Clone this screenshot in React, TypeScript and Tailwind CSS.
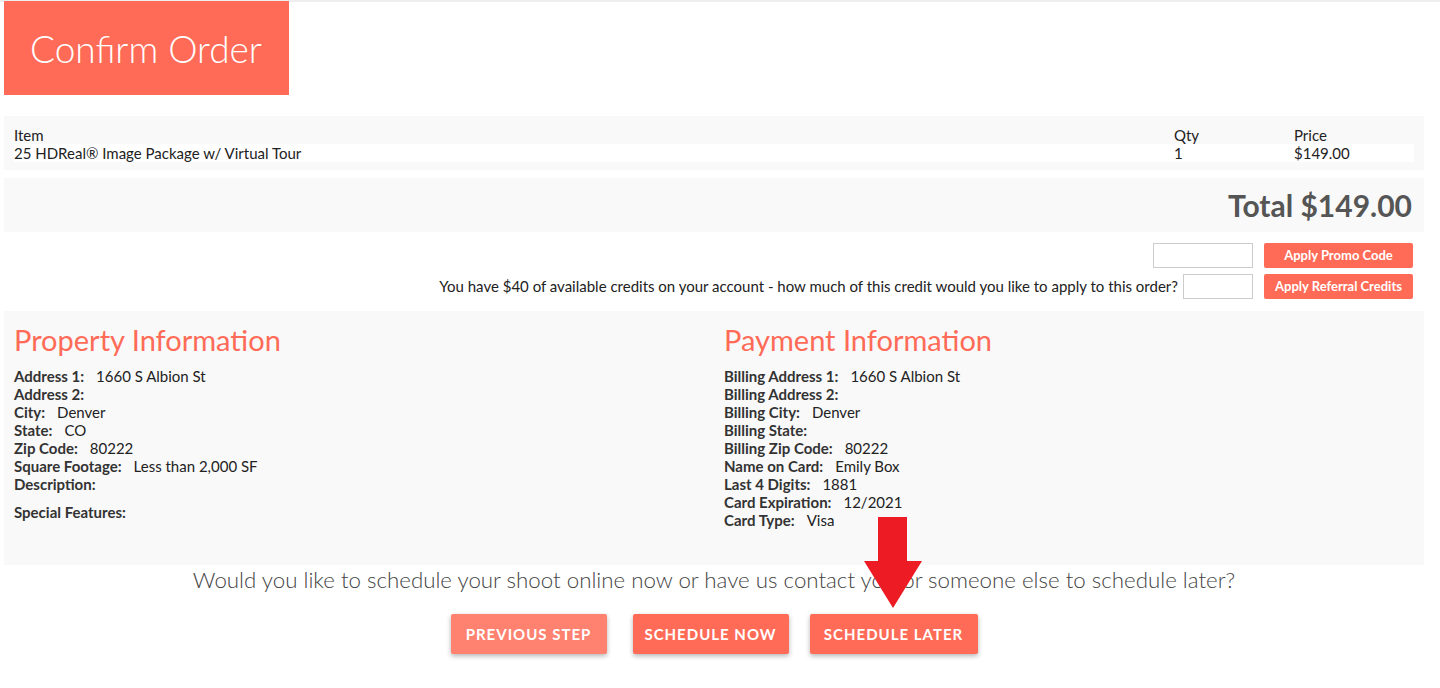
import React from "react";

const orange = "bg-[#ff6b57]";

const property: [string, string][] = [
  ["Address 1:", "1660 S Albion St"],
  ["Address 2:", ""],
  ["City:", "Denver"],
  ["State:", "CO"],
  ["Zip Code:", "80222"],
  ["Square Footage:", "Less than 2,000 SF"],
  ["Description:", ""],
];

const payment: [string, string][] = [
  ["Billing Address 1:", "1660 S Albion St"],
  ["Billing Address 2:", ""],
  ["Billing City:", "Denver"],
  ["Billing State:", ""],
  ["Billing Zip Code:", "80222"],
  ["Name on Card:", "Emily Box"],
  ["Last 4 Digits:", "1881"],
  ["Card Expiration:", "12/2021"],
  ["Card Type:", "Visa"],
];

function Line({ label, value }: { label: string; value: string }) {
  return (
    <div className="leading-[18px]">
      <span className="font-bold text-[#333]">{label}</span>
      {value && <span className="ml-[12px]">{value}</span>}
    </div>
  );
}

export default function App() {
  return (
    <div className="relative min-h-screen bg-white border-t-2 border-[#eeeeee] font-['Lato',sans-serif] text-[15px] text-[#222]">
      <div className="ml-[4px] w-[1420px]">
        {/* header */}
        <div className={`-mt-px relative w-[285px] h-[94px] ${orange} flex items-center pl-[26px]`}>
          <h1 className="text-white text-[37px] font-light leading-none">Confirm Order</h1>
        </div>

        {/* items table */}
        <div className="mt-[21px] bg-[#f9f9f9] px-[10px] pt-[10px] pb-[8px]">
          <div className="flex leading-[18px]">
            <div className="flex-1">Item</div>
            <div className="w-[120px]">Qty</div>
            <div className="w-[120px]">Price</div>
          </div>
          <div className="flex leading-[18px] bg-white">
            <div className="flex-1">25 HDReal® Image Package w/ Virtual Tour</div>
            <div className="w-[120px]">1</div>
            <div className="w-[120px]">$149.00</div>
          </div>
        </div>

        {/* total */}
        <div className="mt-[8px] h-[54px] bg-[#f9f9f9] flex items-center justify-end pr-[12px]">
          <span className="text-[30px] font-bold text-[#555]">Total $149.00</span>
        </div>

        {/* promo / credits */}
        <div className="mt-[11px] flex flex-col items-end gap-[6px] pr-[11px]">
          <div className="flex items-center">
            <input className="w-[100px] h-[25px] border border-[#cccccc] bg-white" />
            <button className={`ml-[11px] w-[149px] h-[25px] ${orange} rounded-[2px] text-white text-[13px] font-bold`}>
              Apply Promo Code
            </button>
          </div>
          <div className="flex items-center">
            <span className="mr-[5px]">
              You have $40 of available credits on your account - how much of this credit would you like to apply to this order?
            </span>
            <input className="w-[70px] h-[25px] border border-[#cccccc] bg-white" />
            <button className={`ml-[11px] w-[149px] h-[25px] ${orange} rounded-[2px] text-white text-[13px] font-bold`}>
              Apply Referral Credits
            </button>
          </div>
        </div>

        {/* info panel */}
        <div className="mt-[12px] h-[254px] bg-[#f9f9f9] grid grid-cols-2">
          <div className="px-[10px] pt-[11px]">
            <h2 className="text-[29px] leading-[36px] text-[#ff6b57] mb-[9px]">Property Information</h2>
            {property.map(([l, v]) => (
              <Line key={l} label={l} value={v} />
            ))}
            <div className="mt-[10px]">
              <Line label="Special Features:" value="" />
            </div>
          </div>
          <div className="px-[10px] pt-[11px]">
            <h2 className="text-[29px] leading-[36px] text-[#ff6b57] mb-[9px]">Payment Information</h2>
            {payment.map(([l, v]) => (
              <Line key={l} label={l} value={v} />
            ))}
          </div>
        </div>

        {/* schedule */}
        <p className="text-center text-[22.3px] font-light leading-[28px] text-[#444] mt-px">
          Would you like to schedule your shoot online now or have us contact you or someone else to schedule later?
        </p>
        <div className="mt-[20px] flex justify-center">
          <button className="w-[156px] h-[40px] bg-[#ff8170] rounded-[2px] text-white font-bold text-[15px] uppercase tracking-[1px] shadow-[0_2px_5px_rgba(0,0,0,0.3)] mr-[26px]">
            Previous Step
          </button>
          <button className={`w-[156px] h-[40px] ${orange} rounded-[2px] text-white font-bold text-[15px] uppercase tracking-[1px] shadow-[0_2px_5px_rgba(0,0,0,0.3)] mr-[21px]`}>
            Schedule Now
          </button>
          <button className={`w-[168px] h-[40px] ${orange} rounded-[2px] text-white font-bold text-[15px] uppercase tracking-[1px] shadow-[0_2px_5px_rgba(0,0,0,0.3)]`}>
            Schedule Later
          </button>
        </div>
      </div>

      {/* annotation arrow */}
      <svg className="absolute left-[864px] top-[515px]" width="58" height="91" viewBox="0 0 58 91">
        <path d="M14 0 H43 V44 H58 L29 91 L0 44 H14 Z" fill="#ed1c24" />
      </svg>
    </div>
  );
}
